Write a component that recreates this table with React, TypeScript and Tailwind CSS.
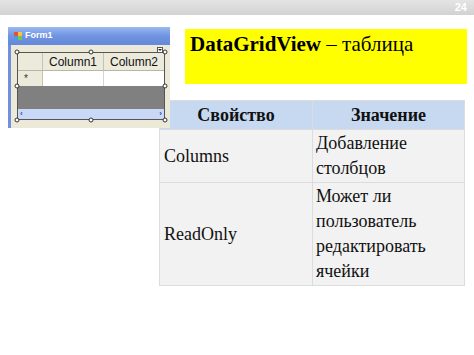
import React from 'react'

const serif = { fontFamily: "'Liberation Serif', 'Times New Roman', serif" }
const sans = { fontFamily: "'Liberation Sans', Arial, sans-serif" }

function Handle({ className }: { className: string }) {
  return (
    <div
      className={`absolute w-[5px] h-[5px] rounded-full bg-white border border-[#333] -translate-x-1/2 -translate-y-1/2 ${className}`}
    />
  )
}

// the little designer screenshot in the top left corner
function FormPreview() {
  return (
    <div className="absolute left-0 top-[15px] w-[170px] h-[113px] bg-white z-10 overflow-hidden">
      <div className="absolute left-[8px] top-[12px] w-[170px] h-[101px] flex flex-col">
        <div className="h-[18px] flex items-center gap-[3px] pl-[6px] bg-gradient-to-b from-[#9ab8f0] via-[#7094e0] to-[#6488da]">
          <div className="w-[8px] h-[8px] grid grid-cols-2">
            <div className="bg-[#e6503c]" />
            <div className="bg-[#f4c542]" />
            <div className="bg-[#4a9de0]" />
            <div className="bg-[#7bc05a]" />
          </div>
          <span className="text-[9px] font-bold text-white" style={sans}>
            Form1
          </span>
        </div>
        <div className="flex-1 flex">
          <div className="w-[3px] bg-[#7090dc]" />
          <div className="flex-1 bg-[#ece9d8] relative">
            <div className="absolute left-[6px] top-[7px] w-[148px] h-[68px] border border-[#555] flex flex-col bg-[#808080]">
              <div className="h-[18px] flex bg-[#ebeadb] border-b border-[#b9b6a6]">
                <div className="w-[25px] border-r border-[#c5c2b2]" />
                <div className="w-[61px] border-r border-[#c5c2b2] flex items-center justify-center text-[12px] text-[#111]" style={sans}>
                  Column1
                </div>
                <div className="flex-1 flex items-center justify-center text-[12px] text-[#111]" style={sans}>
                  Column2
                </div>
              </div>
              <div className="h-[15px] flex bg-white">
                <div className="w-[25px] bg-[#ebeadb] border-r border-[#c5c2b2] flex items-center pl-[6px] text-[10px] text-[#333]" style={sans}>
                  *
                </div>
                <div className="w-[61px] border-r border-[#d5d5d5]" />
                <div className="flex-1" />
              </div>
              <div className="flex-1" />
              <div className="h-[10px] flex items-center justify-between px-[2px] bg-[#c8d8f6]">
                <span className="text-[8px] leading-none text-[#3050a0] font-bold" style={sans}>‹</span>
                <span className="text-[8px] leading-none text-[#3050a0] font-bold" style={sans}>›</span>
              </div>
            </div>
            <div className="absolute left-[146px] top-[2px] w-[6px] h-[6px] bg-white border border-[#555] flex items-center justify-center">
              <div className="w-0 h-0 border-l-[2px] border-l-transparent border-r-[2px] border-r-transparent border-t-[2px] border-t-[#222]" />
            </div>
            <Handle className="left-[6px] top-[7px]" />
            <Handle className="left-[80px] top-[7px]" />
            <Handle className="left-[154px] top-[7px]" />
            <Handle className="left-[6px] top-[41px]" />
            <Handle className="left-[154px] top-[41px]" />
            <Handle className="left-[6px] top-[75px]" />
            <Handle className="left-[80px] top-[75px]" />
            <Handle className="left-[154px] top-[75px]" />
          </div>
        </div>
      </div>
    </div>
  )
}

const rows = [
  { name: 'Columns', value: ['Добавление', 'столбцов'] },
  { name: 'ReadOnly', value: ['Может ли', 'пользователь', 'редактировать', 'ячейки'] },
]

export default function App() {
  return (
    <div className="w-[474px] h-[355px] bg-white relative overflow-hidden">
      <div className="h-[15px] bg-gradient-to-b from-[#e4e4e4] to-[#d2d2d2] flex items-center justify-end pr-[7px]">
        <span className="text-[11px] font-bold text-white" style={sans}>
          24
        </span>
      </div>

      <FormPreview />

      <div className="flex flex-col">
        <div className="ml-[185px] mt-[14px] w-[282px] h-[55px] bg-[#ffff00] pl-[5px] pt-[2px]">
          <p className="text-[21px] text-black leading-[26px]" style={serif}>
            <span className="font-bold">DataGridView</span> – таблица
          </p>
        </div>

        <table className="ml-[159px] mt-[16px] w-[306px] border-collapse text-[18px] text-[#111]" style={serif}>
          <thead>
            <tr className="h-[29px] bg-[#c6d9f1]">
              <th className="w-[153px] border border-[#dcdcdc] font-bold">Свойство</th>
              <th className="border border-[#dcdcdc] font-bold">Значение</th>
            </tr>
          </thead>
          <tbody>
            {rows.map(row => (
              <tr key={row.name} className="bg-[#f2f2f2]">
                <td className="border border-[#dcdcdc] pl-[4px] align-middle leading-[25px]">{row.name}</td>
                <td className="border border-[#dcdcdc] pl-[3px] py-[1px] leading-[25px]">
                  {row.value.map(line => (
                    <div key={line}>{line}</div>
                  ))}
                </td>
              </tr>
            ))}
          </tbody>
        </table>
      </div>
    </div>
  )
}
